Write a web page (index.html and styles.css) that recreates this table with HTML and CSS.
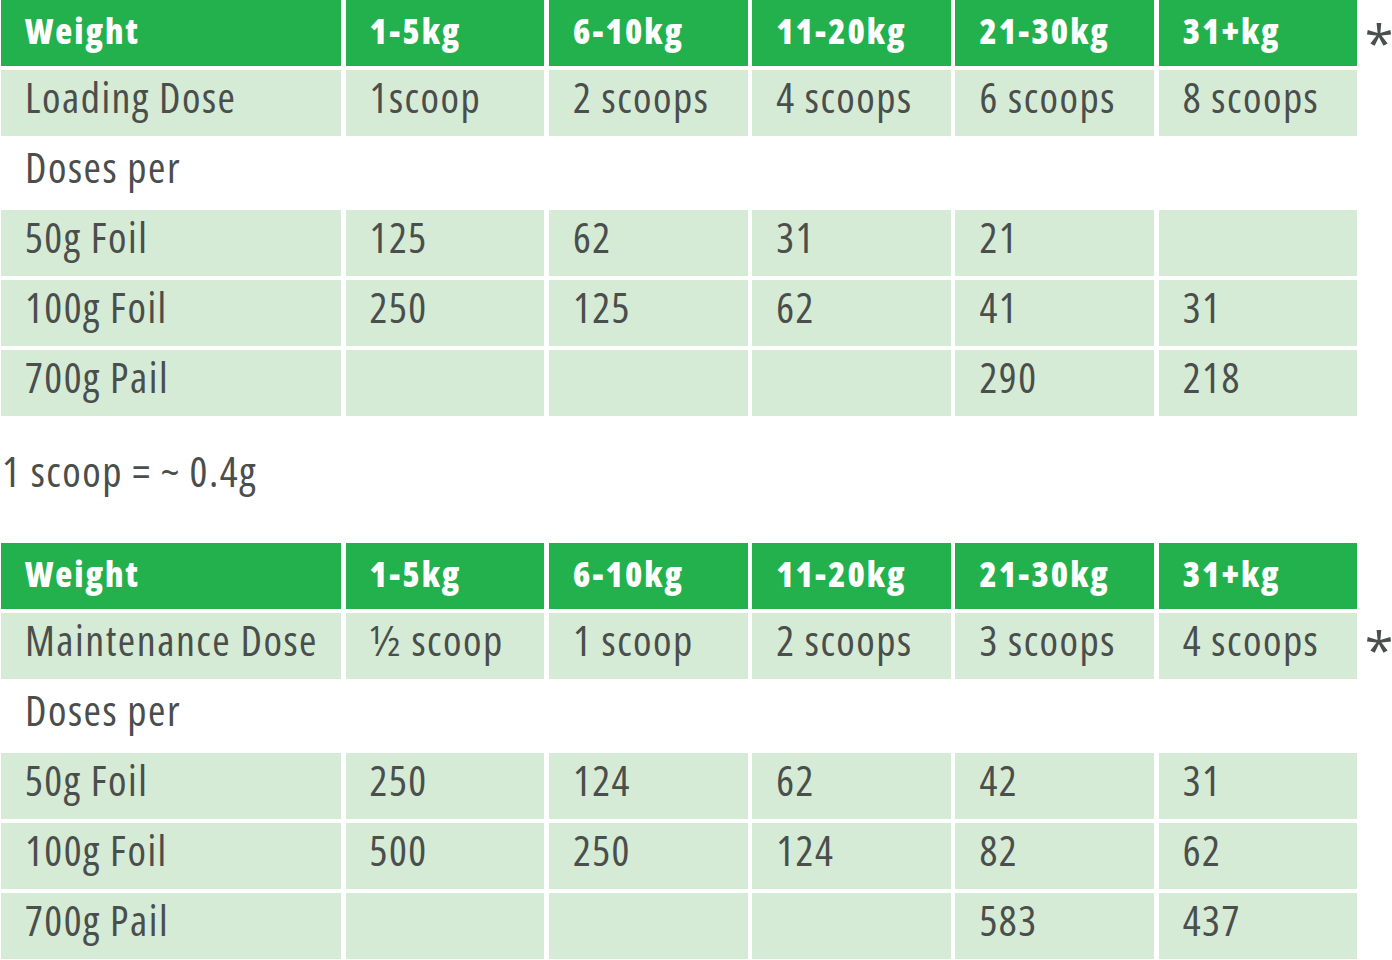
FILE: index.html
```html
<!DOCTYPE html>
<html>
<head>
<meta charset="utf-8">
<link rel="stylesheet" href="styles.css">
</head>
<body>
<div class="page">
  <div class="table">
    <div class="row head">
      <div class="cell">Weight</div><div class="cell">1-5kg</div><div class="cell">6-10kg</div><div class="cell">11-20kg</div><div class="cell">21-30kg</div><div class="cell">31+kg</div><div class="note">*</div>
    </div>
    <div class="row">
      <div class="cell">Loading Dose</div><div class="cell">1scoop</div><div class="cell">2 scoops</div><div class="cell">4 scoops</div><div class="cell">6 scoops</div><div class="cell">8 scoops</div>
    </div>
    <div class="row plain">
      <div class="cell">Doses per</div>
    </div>
    <div class="row">
      <div class="cell">50g Foil</div><div class="cell">125</div><div class="cell">62</div><div class="cell">31</div><div class="cell">21</div><div class="cell"></div>
    </div>
    <div class="row">
      <div class="cell">100g Foil</div><div class="cell">250</div><div class="cell">125</div><div class="cell">62</div><div class="cell">41</div><div class="cell">31</div>
    </div>
    <div class="row">
      <div class="cell">700g Pail</div><div class="cell"></div><div class="cell"></div><div class="cell"></div><div class="cell">290</div><div class="cell">218</div>
    </div>
  </div>

  <p class="footnote">1 scoop = ~ 0.4g</p>

  <div class="table">
    <div class="row head">
      <div class="cell">Weight</div><div class="cell">1-5kg</div><div class="cell">6-10kg</div><div class="cell">11-20kg</div><div class="cell">21-30kg</div><div class="cell">31+kg</div>
    </div>
    <div class="row">
      <div class="cell">Maintenance Dose</div><div class="cell">½ scoop</div><div class="cell">1 scoop</div><div class="cell">2 scoops</div><div class="cell">3 scoops</div><div class="cell">4 scoops</div><div class="note low">*</div>
    </div>
    <div class="row plain">
      <div class="cell">Doses per</div>
    </div>
    <div class="row">
      <div class="cell">50g Foil</div><div class="cell">250</div><div class="cell">124</div><div class="cell">62</div><div class="cell">42</div><div class="cell">31</div>
    </div>
    <div class="row">
      <div class="cell">100g Foil</div><div class="cell">500</div><div class="cell">250</div><div class="cell">124</div><div class="cell">82</div><div class="cell">62</div>
    </div>
    <div class="row">
      <div class="cell">700g Pail</div><div class="cell"></div><div class="cell"></div><div class="cell"></div><div class="cell">583</div><div class="cell">437</div>
    </div>
  </div>
</div>
</body>
</html>
```
FILE: styles.css
```css
html, body {
  margin: 0;
  padding: 0;
  background: #ffffff;
}

.page {
  width: 1391px;
  padding-left: 1px;
  font-family: "Open Sans", "Liberation Sans", sans-serif;
  font-stretch: 75%;
  font-weight: 400;
  letter-spacing: 1.5px;
  color: #4a4e4c;
}

.table {
  display: flex;
  flex-direction: column;
  gap: 4px;
}

.row {
  display: grid;
  grid-template-columns: 340px repeat(5, 1fr) 30px;
  grid-template-rows: 66px;
  column-gap: 4.6px;
  height: 66px;
}

.cell {
  background: #d5ebd5;
  display: flex;
  align-items: center;
  padding-left: 24px;
  font-size: 42px;
  line-height: 1;
  padding-bottom: 12px;
  white-space: nowrap;
}

.row.head .cell {
  background: #22b14c;
  color: #ffffff;
  font-weight: 800;
  font-size: 35px;
  letter-spacing: 2px;
  padding-bottom: 6px;
}

.row.plain .cell {
  background: transparent;
}

.note {
  display: flex;
  justify-content: center;
  align-items: flex-start;
  box-sizing: border-box;
  height: 66px;
  font-stretch: 100%;
  font-weight: 500;
  font-size: 52px;
  letter-spacing: 0;
  line-height: 1;
  padding-top: 16px;
  padding-left: 4px;
  color: #4a4e4c;
}

.note.low {
  padding-top: 10px;
}

.footnote {
  margin: 0;
  height: 127px;
  display: flex;
  align-items: center;
  padding-left: 1px;
  font-size: 42px;
  line-height: 1;
  padding-bottom: 18px;
  box-sizing: border-box;
}
```
